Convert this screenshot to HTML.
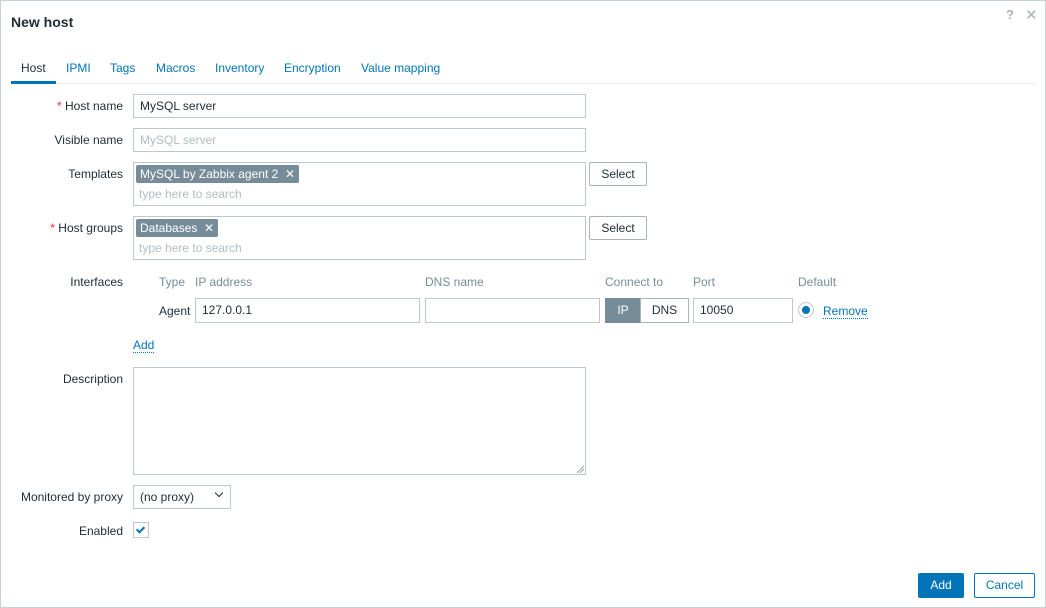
<!DOCTYPE html>
<html><head><meta charset="utf-8"><style>
*{box-sizing:border-box;margin:0;padding:0}
body{width:1046px;height:608px;background:#fff;font-family:"Liberation Sans",sans-serif;font-size:12px;color:#1f2c33;position:relative;overflow:hidden}
.frame{position:absolute;left:0;top:0;width:1046px;height:608px;border:1px solid #c9d0d5}
.a{position:absolute;white-space:nowrap}
.lbl{position:absolute;right:923px;white-space:nowrap}
.in{position:absolute;border:1px solid #bfc7cd;background:#fff;padding-left:6px;line-height:22px}
.btn{position:absolute;border:1px solid #aab4ba;background:#fff;text-align:center;line-height:22px;border-radius:2px}
.tag{position:absolute;background:#768d99;color:#fff;line-height:18px;padding:0 4px;border-radius:2px}
.ph{color:#b4bcc1}
.link{color:#0275b8}
.dot{border-bottom:1px dotted #0275b8}
.red{color:#e33734}
.hd{color:#768d99}
</style></head><body>
<div class="frame"></div>
<div class="a" style="left:11px;top:14px;font-size:14px;font-weight:bold;color:#1f2c33">New host</div>
<div class="a" style="left:1006px;top:7px;font-size:13px;font-weight:bold;color:#a8b2b8">?</div>
<div class="a" style="left:1025px;top:6px;font-size:15px;color:#a8b2b8">✕</div>

<div class="a" style="left:11px;top:83px;width:1024px;height:1px;background:#ebeef0"></div>
<div class="a" style="left:11px;top:81px;width:45px;height:3px;background:#0275b8"></div>
<div class="a" style="left:21px;top:61px">Host</div>
<div class="a link" style="left:66px;top:61px">IPMI</div>
<div class="a link" style="left:110px;top:61px">Tags</div>
<div class="a link" style="left:156px;top:61px">Macros</div>
<div class="a link" style="left:215px;top:61px">Inventory</div>
<div class="a link" style="left:284px;top:61px">Encryption</div>
<div class="a link" style="left:361px;top:61px">Value mapping</div>

<div class="lbl" style="top:99px"><span class="red">*</span> Host name</div>
<div class="in" style="left:133px;top:94px;width:453px;height:24px">MySQL server</div>
<div class="lbl" style="top:133px">Visible name</div>
<div class="in ph" style="left:133px;top:128px;width:453px;height:24px">MySQL server</div>

<div class="lbl" style="top:167px">Templates</div>
<div class="in" style="left:133px;top:162px;width:453px;height:44px"></div>
<div class="tag" style="left:136px;top:165px">MySQL by Zabbix agent 2 &nbsp;✕</div>
<div class="a ph" style="left:139px;top:187px">type here to search</div>
<div class="btn" style="left:589px;top:162px;width:58px;height:24px">Select</div>

<div class="lbl" style="top:221px"><span class="red">*</span> Host groups</div>
<div class="in" style="left:133px;top:216px;width:453px;height:44px"></div>
<div class="tag" style="left:136px;top:219px">Databases &nbsp;✕</div>
<div class="a ph" style="left:139px;top:241px">type here to search</div>
<div class="btn" style="left:589px;top:216px;width:58px;height:24px">Select</div>

<div class="lbl" style="top:275px">Interfaces</div>
<div class="a hd" style="left:159px;top:275px">Type</div>
<div class="a hd" style="left:195px;top:275px">IP address</div>
<div class="a hd" style="left:425px;top:275px">DNS name</div>
<div class="a hd" style="left:605px;top:275px">Connect to</div>
<div class="a hd" style="left:693px;top:275px">Port</div>
<div class="a hd" style="left:798px;top:275px">Default</div>
<div class="a" style="left:159px;top:304px">Agent</div>
<div class="in" style="left:195px;top:298px;width:225px;height:25px">127.0.0.1</div>
<div class="in" style="left:425px;top:298px;width:175px;height:25px"></div>
<div class="a" style="left:605px;top:298px;width:36px;height:25px;background:#768d99;color:#fff;text-align:center;line-height:25px">IP</div>
<div class="a" style="left:640px;top:298px;width:49px;height:25px;border:1px solid #aab4ba;text-align:center;line-height:23px">DNS</div>
<div class="in" style="left:693px;top:298px;width:100px;height:25px">10050</div>
<div class="a" style="left:798px;top:302px;width:16px;height:16px;border:1px solid #bfc7cd;border-radius:50%"></div>
<div class="a" style="left:802px;top:306px;width:8px;height:8px;background:#0275b8;border-radius:50%"></div>
<div class="a link" style="left:823px;top:304px"><span class="dot">Remove</span></div>
<div class="a link" style="left:133px;top:338px"><span class="dot">Add</span></div>

<div class="lbl" style="top:372px">Description</div>
<div class="in" style="left:133px;top:367px;width:453px;height:108px"></div>
<svg class="a" style="left:577px;top:466px" width="7" height="7"><path d="M0 7L7 0M3 7L7 3" stroke="#9aa5ab" stroke-width="1"/></svg>

<div class="lbl" style="top:490px">Monitored by proxy</div>
<div class="in" style="left:133px;top:485px;width:98px;height:24px">(no proxy)</div>
<div class="a" style="left:216px;top:490px;width:6px;height:6px;border-right:1px solid #1f2c33;border-bottom:1px solid #1f2c33;transform:rotate(45deg)"></div>

<div class="lbl" style="top:524px">Enabled</div>
<div class="a" style="left:133px;top:522px;width:16px;height:16px;border:1px solid #bfc7cd"></div>
<div class="a" style="left:138px;top:525px;width:5px;height:8px;border-right:2px solid #0275b8;border-bottom:2px solid #0275b8;transform:rotate(45deg)"></div>

<div class="a" style="left:918px;top:573px;width:46px;height:25px;background:#0275b8;color:#fff;text-align:center;line-height:25px;border-radius:2px">Add</div>
<div class="a" style="left:974px;top:573px;width:61px;height:25px;border:1px solid #0275b8;color:#0275b8;text-align:center;line-height:23px;border-radius:2px">Cancel</div>
</body></html>
